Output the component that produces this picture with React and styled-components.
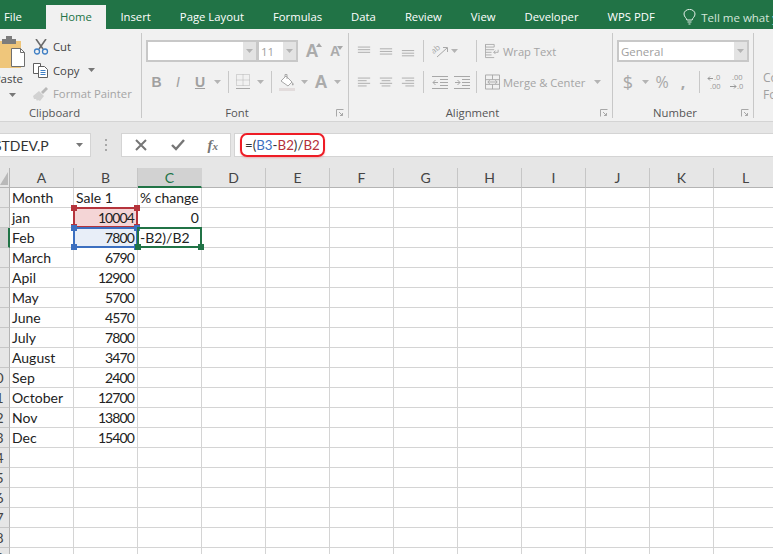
import React from 'react';
import styled, { createGlobalStyle } from 'styled-components';

const GlobalStyle = createGlobalStyle`
  html, body {
    margin: 0;
    padding: 0;
    overflow: hidden;
    background: #fff;
  }
`;

const MONTHS = [
  ['Month', 'Sale 1', '% change'],
  ['jan', 10004, 0],
  ['Feb', 7800, '-B2)/B2'],
  ['March', 6790],
  ['Apil', 12900],
  ['May', 5700],
  ['June', 4570],
  ['July', 7800],
  ['August', 3470],
  ['Sep', 2400],
  ['October', 12700],
  ['Nov', 13800],
  ['Dec', 15400],
];

const COLUMNS = ['A', 'B', 'C', 'D', 'E', 'F', 'G', 'H', 'I', 'J', 'K', 'L'];
const TABS = ['Insert', 'Page Layout', 'Formulas', 'Data', 'Review', 'View', 'Developer', 'WPS PDF'];

const Arrow = ({ color = '#b4b4b4' }) => (
  <svg width="7" height="4" viewBox="0 0 7 4"><path d="M0 0h7L3.5 4z" fill={color} /></svg>
);

const Launcher = () => (
  <St.LauncherBox>
    <svg width="8" height="8" viewBox="0 0 8 8" fill="none" stroke="#a8a8a8">
      <path d="M.5 7.500v-7h7M3 3l3.500 3.500M6.500 4v2.500H4" />
    </svg>
  </St.LauncherBox>
);

const Lines = ({ rows }) => (
  <svg width="16" height="16" viewBox="0 0 16 16" stroke="#a6a6a6" fill="none">
    {rows.map(([a, b, y]) => <path key={y} d={`M${a} ${y + 0.5}H${b}`} />)}
  </svg>
);

const Handles = ({ bottom }) => (
  <>
    {!bottom && <St.Handle $top $left />}
    {!bottom && <St.Handle $top />}
    <St.Handle $left />
    <St.Handle />
  </>
);

const App = () => {
  return (
    <St.Page>
      <GlobalStyle />
      <St.TabBar>
        <St.Tab $file>File</St.Tab>
        <St.ActiveTab>Home</St.ActiveTab>
        {TABS.map((t) => <St.Tab key={t}>{t}</St.Tab>)}
        <St.TellMe>
          <svg width="13" height="16" viewBox="0 0 13 16" fill="none" stroke="#e4efe8" strokeWidth="1">
            <path d="M3.800 11c0-2-2.800-3-2.800-6a5.500 4.600 0 0 1 11 0c0 3-2.800 4-2.800 6zM4.500 13h4M5.500 15h2" />
          </svg>
          <span>Tell me what you want to do</span>
        </St.TellMe>
      </St.TabBar>

      <St.Ribbon>
        <St.Group $w={142}>
          <St.ClipboardBody>
            <St.PasteButton>
              <svg width="25" height="32" viewBox="0 0 25 32">
                <rect x="0" y="5" width="21" height="27" fill="#efc67b" />
                <rect x="2" y="3" width="14" height="5" fill="#7c7c7c" />
                <rect x="6" y="0" width="6" height="4" fill="#7c7c7c" />
                <path d="M11.500 12.500h9l4 4v14h-13z" fill="#fff" stroke="#6f6f6f" />
                <path d="M20.500 12.500v4h4" fill="none" stroke="#6f6f6f" />
              </svg>
              <St.PasteLabel>Paste</St.PasteLabel>
              <Arrow color="#777" />
            </St.PasteButton>
            <St.ClipList>
              <St.ClipRow>
                <svg width="16" height="16" viewBox="0 0 16 16" fill="none">
                  <path d="M3 0l7 10M13 0L6 10" stroke="#6b6b6b" strokeWidth="1.600" />
                  <circle cx="4" cy="12.500" r="2.500" stroke="#3f7fc4" strokeWidth="1.300" />
                  <circle cx="12" cy="12.500" r="2.500" stroke="#3f7fc4" strokeWidth="1.300" />
                </svg>
                Cut
              </St.ClipRow>
              <St.ClipRow>
                <svg width="16" height="16" viewBox="0 0 16 16" fill="#fff" stroke="#5f5f5f">
                  <path d="M.5 1.500h7v10h-7z" />
                  <path d="M5.500 4.500h6l3 3v8h-9z" />
                  <path d="M7.500 8.500h5M7.500 10.500h5M7.500 12.500h5" stroke="#3f7fc4" />
                </svg>
                Copy
                <St.CopyArrow><Arrow color="#777" /></St.CopyArrow>
              </St.ClipRow>
              <St.ClipRow $off>
                <svg width="16" height="16" viewBox="0 0 16 16">
                  <path d="M0 10l6-5 5 5-4 5-2-1-1 1-1-2-2 0z" fill="#d2d2d2" />
                  <path d="M8 6l5-5 2 2-5 5z" fill="#b8b8b8" />
                </svg>
                Format Painter
              </St.ClipRow>
            </St.ClipList>
          </St.ClipboardBody>
          <St.GroupLabel $shift={32}>Clipboard</St.GroupLabel>
        </St.Group>

        <St.Group $w={207}>
          <St.Row>
            <St.Combo $w={112}><St.ComboValue /><St.ComboButton><Arrow /></St.ComboButton></St.Combo>
            <St.Combo $w={41} $ml={-1}><St.ComboValue>11</St.ComboValue><St.ComboButton><Arrow /></St.ComboButton></St.Combo>
            <St.Slot $w={24} $ml={2}><St.GlyphA $size={18}>A</St.GlyphA><St.Caret /></St.Slot>
            <St.Slot $w={20} $ml={1}><St.GlyphA $size={14}>A</St.GlyphA><St.Caret $down /></St.Slot>
          </St.Row>
          <St.Row>
            <St.Slot $w={21}><St.Format $bold>B</St.Format></St.Slot>
            <St.Slot $w={22}><St.Format $italic>I</St.Format></St.Slot>
            <St.Slot $w={22}><St.Format $under>U</St.Format></St.Slot>
            <St.Slot $w={12}><Arrow /></St.Slot>
            <St.Sep $ml={5} />
            <St.Slot $w={20} $ml={4}>
              <svg width="14" height="16" viewBox="0 0 14 16" fill="none" stroke="#b5b5b5" strokeDasharray="1 1">
                <path d="M.5 .5h13v11H.5zM7 .5v11M.5 6h13" />
                <path d="M0 14.500h14" stroke="#a8a8a8" strokeDasharray="none" />
              </svg>
            </St.Slot>
            <St.Slot $w={12} $ml={1}><Arrow /></St.Slot>
            <St.Sep $ml={5} />
            <St.Slot $w={22} $ml={4}>
              <svg width="16" height="18" viewBox="0 0 16 18" fill="none">
                <path d="M2 8l5-5 6 6-4 4z" fill="#fff" stroke="#a8a8a8" />
                <path d="M6 4V1.500h2V6" stroke="#a8a8a8" />
                <path d="M13.500 9c1 1.500 1.500 2 1 3s-2 0-1.500-1z" fill="#a8a8a8" />
                <rect x="0" y="15" width="16" height="3" fill="#e2dcdc" />
              </svg>
            </St.Slot>
            <St.Slot $w={12}><Arrow /></St.Slot>
            <St.Slot $w={20} $ml={1}><St.GlyphA $size={18}>A</St.GlyphA></St.Slot>
            <St.Slot $w={12}><Arrow /></St.Slot>
          </St.Row>
          <St.GroupLabel $shift={16}>Font</St.GroupLabel>
          <Launcher />
        </St.Group>

        <St.Group $w={264}>
          <St.Row>
            <St.Slot $w={14} $ml={4}><Lines rows={[[1, 15, 3], [1, 15, 6], [1, 15, 9]]} /></St.Slot>
            <St.Slot $w={14} $ml={8}><Lines rows={[[1, 15, 5], [1, 15, 8], [1, 15, 11]]} /></St.Slot>
            <St.Slot $w={14} $ml={8}><Lines rows={[[1, 15, 7], [1, 15, 10], [1, 15, 13]]} /></St.Slot>
            <St.Sep $ml={8} />
            <St.Slot $w={16} $ml={8}>
              <svg width="16" height="16" viewBox="0 0 16 16" fill="none" stroke="#a8a8a8">
                <text x="0" y="9" fontSize="8" fontFamily="Open Sans" fill="#a8a8a8" stroke="none" transform="rotate(-40 4 8)">ab</text>
                <path d="M5 14L15 5M11 4.500h4.500V9" />
              </svg>
            </St.Slot>
            <St.Slot $w={12}><Arrow /></St.Slot>
            <St.Sep $ml={16} />
            <St.Slot $w={14} $ml={8}>
              <svg width="16" height="16" viewBox="0 0 16 16" fill="none" stroke="#a8a8a8">
                <path d="M.5 .5h10v3H.5zM.5 6.500h10M.5 9.500h7M.5 12.500h7M.5 15.500h10M.5 .5v15M10 9.500h5v-3M10 9.500l2-2M10 9.500l2 2" />
              </svg>
            </St.Slot>
            <St.ActionText $ml={4}>Wrap Text</St.ActionText>
          </St.Row>
          <St.Row>
            <St.Slot $w={14} $ml={4}><Lines rows={[[1, 15, 3], [1, 11, 6], [1, 15, 9], [1, 11, 12]]} /></St.Slot>
            <St.Slot $w={14} $ml={8}><Lines rows={[[1, 15, 3], [3, 13, 6], [1, 15, 9], [3, 13, 12]]} /></St.Slot>
            <St.Slot $w={14} $ml={8}><Lines rows={[[1, 15, 3], [5, 15, 6], [1, 15, 9], [5, 15, 12]]} /></St.Slot>
            <St.Sep $ml={8} />
            <St.Slot $w={16} $ml={8}>
              <svg width="16" height="16" viewBox="0 0 16 16" fill="none" stroke="#a8a8a8">
                <path d="M0 2.500h16M8 5.500h8M8 8.500h8M8 11.500h8M0 14.500h16M6 8.500H1M3.500 6L1 8.500 3.500 11" />
              </svg>
            </St.Slot>
            <St.Slot $w={16} $ml={6}>
              <svg width="16" height="16" viewBox="0 0 16 16" fill="none" stroke="#a8a8a8">
                <path d="M0 2.500h16M8 5.500h8M8 8.500h8M8 11.500h8M0 14.500h16M1 8.500h5M3.500 6L6 8.500 3.500 11" />
              </svg>
            </St.Slot>
            <St.Sep $ml={6} />
            <St.Slot $w={15} $ml={8}>
              <svg width="16" height="16" viewBox="0 0 16 16" fill="none" stroke="#a8a8a8">
                <path d="M.5 .5h15v15H.5zM.5 5.500h15M.5 10.500h15M8 .5v5M8 10.500v5M3 8h10M5 6l-2 2 2 2M11 6l2 2-2 2" />
              </svg>
            </St.Slot>
            <St.ActionText $ml={3}>Merge &amp; Center</St.ActionText>
            <St.Slot $w={12} $ml={6}><Arrow /></St.Slot>
          </St.Row>
          <St.GroupLabel $shift={16}>Alignment</St.GroupLabel>
          <Launcher />
        </St.Group>

        <St.Group $w={141}>
          <St.Row>
            <St.Combo $w={132}><St.ComboValue>General</St.ComboValue><St.ComboButton><Arrow /></St.ComboButton></St.Combo>
          </St.Row>
          <St.Row>
            <St.Slot $w={22}><St.NumberGlyph $size={18}>$</St.NumberGlyph></St.Slot>
            <St.Slot $w={12}><Arrow /></St.Slot>
            <St.Slot $w={22}><St.NumberGlyph $size={16}>%</St.NumberGlyph></St.Slot>
            <St.Slot $w={20}><St.NumberGlyph $size={16} $bold>,</St.NumberGlyph></St.Slot>
            <St.Sep $ml={6} />
            <St.Slot $w={20} $ml={5}>
              <svg width="16" height="16" viewBox="0 0 16 16" fill="#989898" fontSize="7.500" fontFamily="Open Sans">
                <text x="7" y="6">.0</text>
                <text x="3" y="15">.00</text>
                <path d="M1 4.500h5M3 2.500l-2 2 2 2" fill="none" stroke="#989898" />
              </svg>
            </St.Slot>
            <St.Slot $w={22} $ml={1}>
              <svg width="16" height="16" viewBox="0 0 16 16" fill="#989898" fontSize="7.500" fontFamily="Open Sans">
                <text x="3" y="6">.00</text>
                <text x="8" y="15">.0</text>
                <path d="M1 12.500h6M5 10.500l2 2-2 2" fill="none" stroke="#989898" />
              </svg>
            </St.Slot>
          </St.Row>
          <St.GroupLabel $shift={16}>Number</St.GroupLabel>
          <Launcher />
        </St.Group>

        <St.LastGroup>
          <span>Conditional</span>
          <span>Formatting</span>
        </St.LastGroup>
      </St.Ribbon>

      <St.FormulaBar>
        <St.NameBox>
          <St.NameText>STDEV.P</St.NameText>
          <Arrow color="#777" />
        </St.NameBox>
        <St.Grip><i /><i /><i /></St.Grip>
        <St.FormulaButtons>
          <svg width="14" height="14" viewBox="0 0 14 14" stroke="#767676" strokeWidth="2"><path d="M2 2l10 10M12 2L2 12" /></svg>
          <svg width="16" height="14" viewBox="0 0 16 14" fill="none" stroke="#767676" strokeWidth="2.400"><path d="M2 7l4 4 8-9" /></svg>
          <St.Fx>f<span>x</span></St.Fx>
        </St.FormulaButtons>
        <St.FormulaInput>
          <St.FormulaPill>
            =(<St.Ref $c="#3c6fc0">B3</St.Ref>-<St.Ref $c="#b5303a">B2</St.Ref>)/<St.Ref $c="#b5303a">B2</St.Ref>
          </St.FormulaPill>
        </St.FormulaInput>
      </St.FormulaBar>

      <St.Sheet>
        <St.Corner />
        {COLUMNS.map((c) => <St.ColHead key={c} $active={c === 'C'}>{c}</St.ColHead>)}
        {Array.from({ length: 19 }, (_, r) => (
          <React.Fragment key={r}>
            <St.RowHead $active={r === 2}><span>{r + 1}</span></St.RowHead>
            {COLUMNS.map((c, i) => {
              const value = MONTHS[r] ? MONTHS[r][i] : undefined;
              const numeric = typeof value === 'number';
              return (
                <St.Cell key={c} $right={numeric}>
                  {r === 1 && c === 'B' && <St.RefBox $c="#b5343c" $fill="#f4d5d6"><Handles /></St.RefBox>}
                  {r === 2 && c === 'B' && <St.RefBox $c="#3c6fc0" $fill="#e8eef8"><Handles /></St.RefBox>}
                  {r === 2 && c === 'C' && <St.RefBox $c="#217346" $fill="transparent"><Handles bottom /></St.RefBox>}
                  <St.CellText>{value}</St.CellText>
                </St.Cell>
              );
            })}
          </React.Fragment>
        ))}
      </St.Sheet>
    </St.Page>
  );
};

export default App;

const uiFont = `"Open Sans", "Noto Sans", sans-serif`;
const cellFont = `Lato, "Open Sans", sans-serif`;

const St = {
  Page: styled.div`
    width: 773px;
    height: 554px;
    overflow: hidden;
    display: flex;
    flex-direction: column;
    font-family: ${uiFont};
  `,

  TabBar: styled.div`
    display: flex;
    flex: none;
    height: 29px;
    padding-top: 5px;
    box-sizing: border-box;
    background-color: #217346;
    white-space: nowrap;
    overflow: hidden;
  `,
  Tab: styled.div`
    flex: none;
    line-height: 24px;
    padding: ${({ $file }) => ($file ? '0 24px 0 4px' : '0 14.500px')};
    font-size: 11.300px;
    color: #fff;
  `,
  ActiveTab: styled.div`
    flex: none;
    width: 60px;
    text-align: center;
    line-height: 24px;
    font-size: 11.300px;
    color: #217346;
    background-color: #f1f1f1;
  `,
  TellMe: styled.div`
    display: flex;
    align-items: center;
    gap: 5px;
    margin-left: 14px;
    height: 24px;
    font-size: 11.500px;
    color: #d3e6da;
  `,

  Ribbon: styled.div`
    display: flex;
    flex: none;
    height: 93px;
    box-sizing: border-box;
    padding: 4px 0 3px;
    background-color: #f1f1f1;
    border-bottom: 1px solid #d4d4d4;
    white-space: nowrap;
  `,
  Group: styled.div`
    position: relative;
    flex: none;
    display: flex;
    flex-direction: column;
    gap: 9px;
    box-sizing: border-box;
    width: ${({ $w }) => $w}px;
    padding: 7px 0 0 4px;
    border-right: 1px solid #c8c8c8;
  `,
  LastGroup: styled.div`
    display: flex;
    flex-direction: column;
    padding: 36px 0 0 9px;
    font-size: 12px;
    line-height: 17px;
    color: #a0a0a0;
  `,
  GroupLabel: styled.div`
    position: absolute;
    left: 0;
    right: ${({ $shift }) => $shift}px;
    bottom: -2px;
    text-align: center;
    font-size: 11.300px;
    line-height: 15px;
    color: #555;
  `,
  LauncherBox: styled.div`
    position: absolute;
    right: 4px;
    bottom: 1px;
    line-height: 0;
  `,

  ClipboardBody: styled.div`
    display: flex;
    margin: -7px 0 0 -4px;
  `,
  PasteButton: styled.div`
    flex: none;
    width: 25px;
    display: flex;
    flex-direction: column;
    align-items: flex-end;
    padding-top: 3px;
    svg:last-child {
      margin: 6px 0 0 0;
      align-self: center;
    }
  `,
  PasteLabel: styled.div`
    margin-right: 2px;
    margin-top: 3px;
    font-size: 11.500px;
    line-height: 16px;
    color: #444;
  `,
  ClipList: styled.div`
    display: flex;
    flex-direction: column;
    margin-left: 8px;
    padding-top: 2px;
  `,
  ClipRow: styled.div`
    display: flex;
    align-items: center;
    gap: 4px;
    height: 23.500px;
    font-size: 11.300px;
    color: ${({ $off }) => ($off ? '#a4a4a4' : '#444')};
  `,
  CopyArrow: styled.span`
    display: flex;
    margin-left: 5px;
  `,

  Row: styled.div`
    display: flex;
    align-items: center;
    height: 22px;
  `,
  Slot: styled.div`
    position: relative;
    flex: none;
    display: flex;
    justify-content: center;
    align-items: center;
    width: ${({ $w }) => $w}px;
    margin-left: ${({ $ml }) => $ml || 0}px;
  `,
  Sep: styled.div`
    flex: none;
    width: 1px;
    align-self: stretch;
    margin-left: ${({ $ml }) => $ml || 0}px;
    background-color: #c8c8c8;
  `,
  Combo: styled.div`
    flex: none;
    display: flex;
    box-sizing: border-box;
    height: 22px;
    width: ${({ $w }) => $w}px;
    margin-left: ${({ $ml }) => $ml || 0}px;
    border: 2px solid #c8c8c8;
    background-color: #fff;
  `,
  ComboValue: styled.div`
    flex: 1;
    padding-left: 2px;
    font-size: 11.500px;
    line-height: 20px;
    color: #a0a0a0;
  `,
  ComboButton: styled.div`
    flex: none;
    width: 13px;
    display: flex;
    justify-content: center;
    align-items: center;
    background-color: #e3e3e3;
  `,
  GlyphA: styled.span`
    font-family: "Liberation Sans", sans-serif;
    font-size: ${({ $size }) => $size}px;
    font-weight: 700;
    color: #ababab;
  `,
  Caret: styled.span`
    position: absolute;
    right: 2px;
    top: ${({ $down }) => ($down ? 3 : 2)}px;
    border-left: 3px solid transparent;
    border-right: 3px solid transparent;
    ${({ $down }) => ($down ? 'border-top: 4px solid #a8a8a8;' : 'border-bottom: 4px solid #a8a8a8;')}
  `,
  Format: styled.span`
    font-family: "Liberation Sans", sans-serif;
    font-size: 14px;
    color: #a0a0a0;
    font-weight: ${({ $italic }) => ($italic ? 400 : 700)};
    font-style: ${({ $italic }) => ($italic ? 'italic' : 'normal')};
    text-decoration: ${({ $under }) => ($under ? 'underline' : 'none')};
  `,
  ActionText: styled.span`
    margin-left: ${({ $ml }) => $ml}px;
    font-size: 11.200px;
    color: #a4a4a4;
  `,
  NumberGlyph: styled.span`
    font-family: ${uiFont};
    font-size: ${({ $size }) => $size}px;
    font-weight: ${({ $bold }) => ($bold ? 700 : 400)};
    color: #a8a8a8;
  `,

  FormulaBar: styled.div`
    display: flex;
    flex: none;
    height: 46px;
    box-sizing: border-box;
    padding: 11px 0;
    background-color: #e6e6e6;
  `,
  NameBox: styled.div`
    flex: none;
    display: flex;
    align-items: center;
    justify-content: space-between;
    box-sizing: border-box;
    width: 91px;
    padding-right: 7px;
    background-color: #fff;
    border: 1px solid #d4d4d4;
    border-left: 0;
  `,
  NameText: styled.span`
    margin-left: -6px;
    font-family: ${cellFont};
    font-size: 14px;
    color: #333;
  `,
  Grip: styled.div`
    flex: none;
    width: 30px;
    display: flex;
    flex-direction: column;
    align-items: center;
    justify-content: center;
    gap: 3px;
    i {
      width: 2px;
      height: 2px;
      background-color: #a8a8a8;
    }
  `,
  FormulaButtons: styled.div`
    flex: none;
    display: flex;
    align-items: center;
    justify-content: space-between;
    box-sizing: border-box;
    width: 110px;
    padding: 0 12px 0 12px;
    background-color: #fff;
    border: 1px solid #d4d4d4;
  `,
  Fx: styled.span`
    font-family: "Liberation Serif", serif;
    font-style: italic;
    font-size: 15px;
    font-weight: 700;
    color: #767676;
    span {
      font-size: 11px;
    }
  `,
  FormulaInput: styled.div`
    flex: 1;
    display: flex;
    align-items: center;
    margin-left: 3px;
    padding-left: 5px;
    background-color: #fff;
    border: 1px solid #d4d4d4;
    border-right: 0;
  `,
  FormulaPill: styled.div`
    box-sizing: border-box;
    width: 85px;
    height: 24px;
    padding-left: 3px;
    border: 2px solid #ee1c25;
    border-radius: 7px;
    box-shadow: 0 1px 2px rgba(238, 28, 37, 0.25);
    font-family: ${cellFont};
    font-size: 13.300px;
    line-height: 20px;
    color: #333;
    white-space: nowrap;
  `,
  Ref: styled.span`
    color: ${({ $c }) => $c};
  `,

  Sheet: styled.div`
    display: grid;
    grid-template-columns: 10px repeat(12, 64px);
    grid-auto-rows: 20px;
    font-family: ${cellFont};
    font-size: 14px;
  `,
  Corner: styled.div`
    box-sizing: border-box;
    background-color: #e6e6e6;
    border-right: 1px solid #b4b4b4;
    border-bottom: 1px solid #b4b4b4;
    &::after {
      content: '';
      display: block;
      width: 8px;
      height: 13px;
      margin-top: 4px;
      background-color: #b9b9b9;
      clip-path: polygon(100% 0, 100% 100%, 0 100%);
    }
  `,
  ColHead: styled.div`
    box-sizing: border-box;
    text-align: center;
    line-height: 19px;
    color: ${({ $active }) => ($active ? '#217346' : '#444')};
    background-color: ${({ $active }) => ($active ? '#d2d2d2' : '#e6e6e6')};
    border-right: 1px solid ${({ $active }) => ($active ? '#d2d2d2' : '#c6c6c6')};
    border-bottom: ${({ $active }) => ($active ? '2px solid #217346' : '1px solid #b4b4b4')};
  `,
  RowHead: styled.div`
    box-sizing: border-box;
    overflow: hidden;
    line-height: 19px;
    color: #444;
    background-color: ${({ $active }) => ($active ? '#d2d2d2' : '#e6e6e6')};
    border-right: ${({ $active }) => ($active ? '2px solid #217346' : '1px solid #b4b4b4')};
    border-bottom: 1px solid #c6c6c6;
    span {
      display: block;
      width: 25px;
      margin-left: -17px;
      text-align: center;
    }
  `,
  Cell: styled.div`
    position: relative;
    box-sizing: border-box;
    padding: ${({ $right }) => ($right ? '0 3px 0 2px' : '0 2px')};
    line-height: 20px;
    color: #222;
    white-space: nowrap;
    text-align: ${({ $right }) => ($right ? 'right' : 'left')};
    letter-spacing: ${({ $right }) => ($right ? '-0.9px' : '0')};
    border-right: 1px solid #d4d4d4;
    border-bottom: 1px solid #d4d4d4;
  `,
  CellText: styled.span`
    position: relative;
    z-index: 2;
  `,
  RefBox: styled.div`
    position: absolute;
    top: -1px;
    left: -1px;
    right: -1px;
    bottom: -1px;
    border: 2px solid ${({ $c }) => $c};
    background-color: ${({ $fill }) => $fill};
    color: ${({ $c }) => $c};
    z-index: 1;
  `,
  Handle: styled.i`
    position: absolute;
    width: 6px;
    height: 6px;
    background-color: currentColor;
    ${({ $top }) => ($top ? 'top: -4px;' : 'bottom: -4px;')}
    ${({ $left }) => ($left ? 'left: -4px;' : 'right: -4px;')}
  `,
};
